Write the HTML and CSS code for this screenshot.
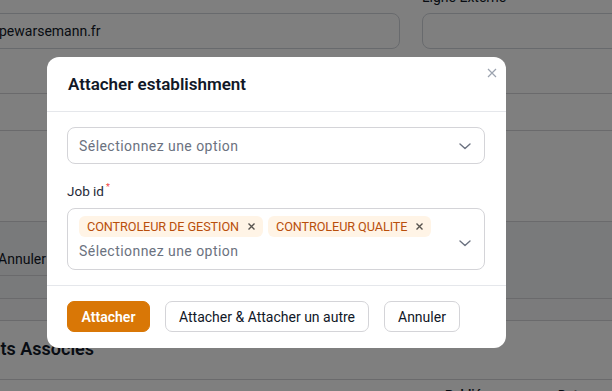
FILE: index.html
```html
<!DOCTYPE html>
<html lang="fr">
<head>
<meta charset="utf-8">
<title>Attacher establishment</title>
<link rel="stylesheet" href="styles.css">
</head>
<body>
<div class="page">
  <div class="fields">
    <div class="field">
      <div class="flabel">Email</div>
      <div class="finput finput-left">pewarsemann.fr</div>
    </div>
    <div class="field">
      <div class="flabel">Ligne Externe</div>
      <div class="finput"></div>
    </div>
  </div>
  <div class="sep sep-a"></div>
  <div class="sep sep-b"></div>
  <div class="sep sep-c"></div>
  <div class="band">
    <div class="band-actions"><span class="bg-btn">Annuler</span></div>
  </div>
  <div class="sep sep-d"></div>
  <div class="assoc-row">
    <div class="assoc"><h2 class="assoc-title">Établissements Associés</h2></div>
  </div>
  <div class="thead">
    <span class="th th-pub">Publié</span>
    <span class="th th-date">Date</span>
  </div>
</div>

<div class="overlay">
  <div class="modal" role="dialog">
    <button class="close" aria-label="Fermer">
      <svg width="10" height="10" viewBox="0 0 10 10"><path d="M1 1L9 9M9 1L1 9" stroke="#9ca3af" stroke-width="1.2" fill="none"/></svg>
    </button>
    <div class="modal-head">
      <h1 class="modal-title">Attacher establishment</h1>
    </div>
    <div class="modal-body">
      <div class="select">
        <span class="placeholder">Sélectionnez une option</span>
        <svg class="chev" width="14" height="14" viewBox="0 0 14 14"><path d="M2 5L7 9.5L12 5" stroke="#6b7280" stroke-width="1.4" fill="none" stroke-linecap="round" stroke-linejoin="round"/></svg>
      </div>
      <div class="label">Job id<sup class="req">*</sup></div>
      <div class="select multi">
        <div class="multi-content">
          <div class="tags">
            <span class="tag">CONTROLEUR DE GESTION<svg class="tag-x" width="9" height="9" viewBox="0 0 9 9"><path d="M1.5 1.5L7.5 7.5M7.5 1.5L1.5 7.5" stroke="#57534e" stroke-width="1.4" fill="none"/></svg></span>
            <span class="tag">CONTROLEUR QUALITE<svg class="tag-x" width="9" height="9" viewBox="0 0 9 9"><path d="M1.5 1.5L7.5 7.5M7.5 1.5L1.5 7.5" stroke="#57534e" stroke-width="1.4" fill="none"/></svg></span>
          </div>
          <span class="placeholder">Sélectionnez une option</span>
        </div>
        <svg class="chev" width="14" height="14" viewBox="0 0 14 14"><path d="M2 5L7 9.5L12 5" stroke="#6b7280" stroke-width="1.4" fill="none" stroke-linecap="round" stroke-linejoin="round"/></svg>
      </div>
    </div>
    <div class="modal-foot">
      <button class="btn btn-primary">Attacher</button>
      <button class="btn">Attacher &amp; Attacher un autre</button>
      <button class="btn">Annuler</button>
    </div>
  </div>
</div>
</body>
</html>
```

FILE: styles.css
```css
* { box-sizing: border-box; }
html, body { margin: 0; padding: 0; }
body {
  width: 612px;
  height: 391px;
  overflow: hidden;
  background: #ffffff;
  font-family: Roboto, "Liberation Sans", sans-serif;
  color: #111827;
  position: relative;
}

/* background page */
.page {
  width: 720px;
  margin-left: -40px;
  margin-top: -13px;
}
.fields {
  display: grid;
  grid-template-columns: 440px 1fr;
  column-gap: 22px;
}
.field { display: flex; flex-direction: column; gap: 6px; }
.flabel { font-size: 14px; line-height: 20px; color: #111827; }
.finput {
  height: 36px;
  border: 1px solid #d1d5db;
  border-radius: 8px;
  font-size: 14px;
  line-height: 34px;
  color: #111827;
  padding-left: 12px;
}
.finput-left { padding-left: 38px; }
.sep { border-bottom: 1px solid #d4d4d8; }
.sep-a { height: 45px; }
.sep-b { height: 37px; }
.sep-c { height: 91px; }
.band {
  height: 77px;
  background: #f3f4f6;
  border-bottom: 1px solid #d4d4d8;
}
.band-actions {
  width: 220px;
  height: 54px;
  border-bottom: 1px solid #d4d4d8;
  display: flex;
  justify-content: flex-end;
  padding-top: 27px;
  padding-right: 134px;
}
.bg-btn { font-size: 14px; line-height: 20px; color: #111827; white-space: nowrap; }
.sep-d { height: 22px; background: #f6f7f8; }
.assoc-row {
  height: 59px;
  border-bottom: 1px solid #d4d4d8;
  padding-top: 16px;
}
.assoc { width: 134px; display: flex; justify-content: flex-end; }
.assoc-title { margin: 0; font-size: 18px; line-height: 24px; font-weight: 600; white-space: nowrap; color: #111827; }
.thead { position: relative; height: 20px; font-size: 13px; font-weight: 600; }
.th { position: absolute; top: 7px; }
.th-pub { left: 485px; }
.th-date { left: 598px; }

/* overlay + modal */
.overlay {
  position: absolute;
  inset: 0;
  background: rgba(0, 0, 0, 0.5);
}
.modal {
  position: absolute;
  left: 47px;
  top: 57px;
  width: 459px;
  height: 291px;
  background: #ffffff;
  border-radius: 12px;
  display: flex;
  flex-direction: column;
}
.close {
  position: absolute;
  top: 10px;
  right: 8px;
  width: 12px;
  height: 12px;
  padding: 0;
  border: 0;
  background: none;
  display: flex;
  align-items: center;
  justify-content: center;
}
.modal-head {
  height: 55px;
  border-bottom: 1px solid #e5e7eb;
  padding: 0 21px;
  display: flex;
  align-items: center;
}
.modal-title { margin: 0; font-size: 17px; line-height: 24px; font-weight: 600; color: #111827; }
.modal-body {
  padding: 15px 21px 15px 20px;
  border-bottom: 1px solid #e5e7eb;
  display: flex;
  flex-direction: column;
}
.select {
  height: 37px;
  border: 1px solid #d4d4d8;
  border-radius: 8px;
  padding: 0 12px 0 11px;
  display: flex;
  align-items: center;
  justify-content: space-between;
}
.placeholder { font-size: 14px; letter-spacing: 0.45px; line-height: 20px; color: #6b7280; }
.chev { flex: none; align-self: center; }
.label { margin-top: 17px; margin-bottom: 7px; font-size: 13.5px; line-height: 20px; color: #1f2937; }
.req { color: #ef4444; font-size: 9px; margin-left: 2px; vertical-align: 6px; line-height: 0; }
.multi { height: 62px; align-items: flex-start; padding-top: 7px; }
.multi-content { display: flex; flex-direction: column; gap: 4px; }
.tags { display: flex; gap: 5px; }
.tag {
  height: 21px;
  background: #fff4e6;
  color: #b94f0b;
  border-radius: 6px;
  font-size: 12.7px;
  letter-spacing: -0.1px;
  line-height: 21px;
  padding: 0 7px 0 8px;
  display: inline-flex;
  align-items: center;
  gap: 8px;
}
.tag-x { flex: none; }
.modal-foot {
  padding: 15px 20px;
  display: flex;
  gap: 15px;
}
.btn {
  height: 31px;
  border: 1px solid #d4d4d8;
  border-radius: 7px;
  background: #ffffff;
  font-family: Roboto, "Liberation Sans", sans-serif;
  font-size: 14px;
  color: #111827;
  padding: 0 13px;
}
.btn-primary {
  background: #d97706;
  border-color: #d97706;
  color: #ffffff;
  font-weight: 600;
  width: 83px;
  padding: 0;
}
```
